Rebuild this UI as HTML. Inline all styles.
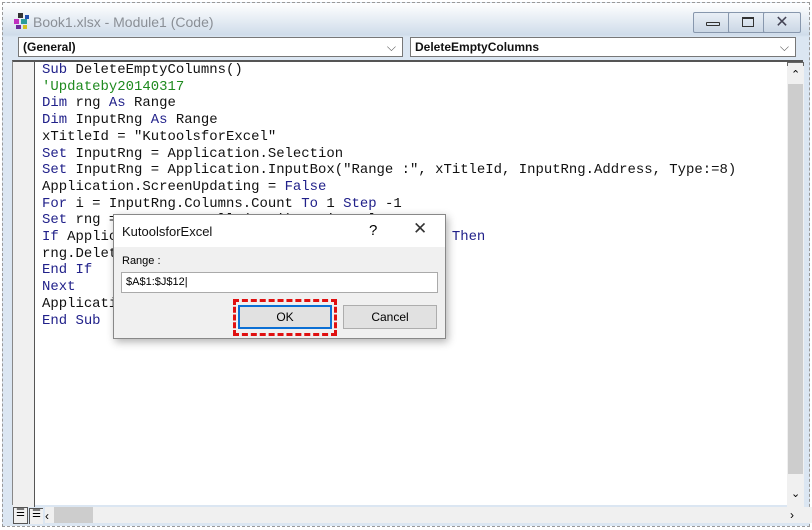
<!DOCTYPE html>
<html><head><meta charset="utf-8"><style>
*{margin:0;padding:0;box-sizing:border-box}
body{width:812px;height:530px;overflow:hidden;background:#fff;font-family:"Liberation Sans",sans-serif;position:relative}
.win{position:absolute;left:2px;top:2px;width:808px;height:525px;background:linear-gradient(#fff 0,#cfdcea 32px,#dbe6f2 34px);border:1px dashed #999}
.title{position:absolute;left:30px;top:11px;font-size:14px;color:#8a8f96}
.btn{position:absolute;top:9px;width:38px;height:21px;border:1px solid #8797ad;border-radius:2px;background:linear-gradient(#e9eff6,#cbd7e5)}
.combo{position:absolute;top:34px;height:20px;background:#fff;border:1px solid #777;font-size:12px;font-weight:bold;padding:2px 4px;color:#111}
.combo span{position:absolute;right:6px;top:2px;font-weight:normal;color:#555}
.code{position:absolute;left:9px;top:57px;width:791px;height:445px;background:#fff;border-top:2px solid #555;border-left:1px solid #888}
.margin{position:absolute;left:0;top:0;width:22px;height:445px;background:#f0f0f0;border-right:1px solid #555}
pre{position:absolute;left:29px;top:0px;font-family:"Liberation Mono",monospace;font-size:13.95px;line-height:16.7px;color:#111}
.k{color:#21218a}.c{color:#1e8a1e}
.vs{position:absolute;left:774px;top:0;width:17px;height:445px;background:#f0f0f0}
.hs{position:absolute;left:32px;top:445px;width:768px;height:16px;background:#f0f0f0}
.dlg{position:absolute;left:113px;top:214px;width:333px;height:125px;background:#f0f0f0;border:1px solid #888;box-shadow:2px 3px 8px rgba(0,0,0,.3)}
.dlg .hd{position:absolute;left:0;top:0;width:331px;height:32px;background:#fff}
.b{position:absolute;height:24px;border:1px solid #adadad;background:#e1e1e1;font-size:12px;text-align:center;line-height:22px}
</style></head><body>
<div class="win">
<svg style="position:absolute;left:9px;top:9px" width="20" height="18"><rect x="6" y="1" width="5" height="5" fill="#333"/><rect x="2" y="7" width="5" height="5" fill="#c030c0"/><rect x="9" y="7" width="6" height="5" fill="#2a9a9a"/><rect x="13" y="3" width="4" height="4" fill="#2050b0"/><rect x="4" y="13" width="5" height="4" fill="#6a2a9a"/><rect x="11" y="13" width="4" height="4" fill="#d0c020"/></svg>
<div class="title">Book1.xlsx - Module1 (Code)</div>
<div class="btn" style="left:690px"><div style="position:absolute;left:12px;top:9px;width:14px;height:4px;border:1px solid #333;border-radius:1px"></div></div>
<div class="btn" style="left:725px"><div style="position:absolute;left:13px;top:4px;width:12px;height:10px;border:1px solid #333;border-top-width:2px"></div></div>
<div class="btn" style="left:760px;font-size:16px;text-align:center;color:#445;line-height:19px">✕</div>
<div class="combo" style="left:15px;width:385px">(General)<span>⌵</span></div>
<div class="combo" style="left:407px;width:386px">DeleteEmptyColumns<span>⌵</span></div>
<div class="code">
<div class="margin"></div>
<pre><span class="k">Sub</span> DeleteEmptyColumns()
<span class="c">'Updateby20140317</span>
<span class="k">Dim</span> rng <span class="k">As</span> Range
<span class="k">Dim</span> InputRng <span class="k">As</span> Range
xTitleId = "KutoolsforExcel"
<span class="k">Set</span> InputRng = Application.Selection
<span class="k">Set</span> InputRng = Application.InputBox("Range :", xTitleId, InputRng.Address, Type:=8)
Application.ScreenUpdating = <span class="k">False</span>
<span class="k">For</span> i = InputRng.Columns.Count <span class="k">To</span> 1 <span class="k">Step</span> -1
<span class="k">Set</span> rng = InputRng.Cells(1, i).EntireColumn
<span class="k">If</span> Application.WorksheetFunction.CountA(rng) = 0 <span class="k">Then</span>
rng.Delete
<span class="k">End If</span>
<span class="k">Next</span>
Application.ScreenUpdating = <span class="k">True</span>
<span class="k">End Sub</span></pre>
<div class="vs"><div style="position:absolute;left:0;top:0;width:17px;height:4px;border:1px solid #666;border-bottom:none"></div><div style="position:absolute;left:4px;top:6px;font-size:11px">⌃</div><div style="position:absolute;left:1px;top:22px;width:15px;height:390px;background:#cdcdcd"></div><div style="position:absolute;left:4px;top:425px;font-size:11px">⌄</div></div>
<div class="hs"><div style="position:absolute;left:0;top:2px;font-size:12px">‹</div><div style="position:absolute;left:9px;top:0;width:39px;height:16px;background:#cdcdcd"></div><div style="position:absolute;left:745px;top:1px;font-size:12px">›</div></div>
<div style="position:absolute;left:0;top:445px;width:15px;height:17px;border:1px solid #555;background:#f0f0f0;font-size:10px;text-align:center">☰</div>
<div style="position:absolute;left:16px;top:446px;width:14px;height:16px;border-top:1px solid #555;border-left:1px solid #555;background:#f0f0f0;font-size:10px;text-align:center">☰</div>
</div>
</div>
<div class="dlg">
<div class="hd"></div>
<div style="position:absolute;left:8px;top:9px;font-size:13px;color:#111">KutoolsforExcel</div>
<div style="position:absolute;left:255px;top:7px;font-size:15px">?</div>
<div style="position:absolute;left:299px;top:4px;font-size:17px;color:#333">✕</div>
<div style="position:absolute;left:8px;top:40px;font-size:11px">Range :</div>
<div style="position:absolute;left:7px;top:57px;width:317px;height:21px;background:#fff;border:1px solid #aaa;font-size:11px;padding:3px 4px">$A$1:$J$12|</div>
<div style="position:absolute;left:119px;top:84px;width:104px;height:37px;border:3px dashed #e01010"></div>
<div class="b" style="left:124px;top:90px;width:94px;border:2px solid #0b6fd4;line-height:20px">OK</div>
<div class="b" style="left:229px;top:90px;width:94px">Cancel</div>
</div>
</body></html>
